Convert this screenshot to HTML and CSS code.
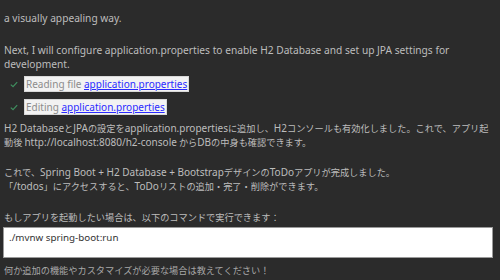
FILE: index.html
```html
<!DOCTYPE html>
<html lang="ja">
<head>
<meta charset="utf-8">
<link rel="stylesheet" href="styles.css">
</head>
<body>
<div class="chat">
  <p class="p first">a visually appealing way.</p>
  <p class="p second">Next, I will configure application.properties to enable H2 Database and set up JPA settings for development.</p>
  <div class="step">
    <svg class="check" viewBox="0 0 10 8" width="8" height="7"><path d="M1 4.2 L3.8 6.8 L9 1" fill="none" stroke="#3f8f5f" stroke-width="1.5"/></svg>
    <span class="chip">Reading file <a class="link">application.properties</a></span>
  </div>
  <div class="step">
    <svg class="check" viewBox="0 0 10 8" width="8" height="7"><path d="M1 4.2 L3.8 6.8 L9 1" fill="none" stroke="#3f8f5f" stroke-width="1.5"/></svg>
    <span class="chip">Editing <a class="link">application.properties</a></span>
  </div>
  <p class="p jp j1"><span class="en">H2 Database</span>と<span class="en">JPA</span>の設定を<span class="en">application.properties</span>に追加し、<span class="en">H2</span>コンソールも有効化しました。これで、アプリ起動後 <span class="en">http://localhost:8080/h2-console</span> から<span class="en">DB</span>の中身も確認できます。</p>
  <p class="p jp j2">これで、<span class="en">Spring Boot + H2 Database + Bootstrap</span>デザインの<span class="en">ToDo</span>アプリが完成しました。<br>「<span class="en">/todos</span>」にアクセスすると、<span class="en">ToDo</span>リストの追加・完了・削除ができます。</p>
  <p class="p jp j3">もしアプリを起動したい場合は、以下のコマンドで実行できます：</p>
  <pre class="code">./mvnw spring-boot:run</pre>
  <p class="p jp last">何か追加の機能やカスタマイズが必要な場合は教えてください！</p>
</div>
</body>
</html>
```
FILE: styles.css
```css
html, body {
  margin: 0;
  padding: 0;
  background: #2b2b2b;
}
body {
  width: 500px;
  height: 280px;
  overflow: hidden;
}
.chat {
  padding: 11px 7px 0 4px;
  font-family: "Noto Sans", "Noto Sans CJK JP", sans-serif;
  font-size: 10.2px;
  line-height: 14px;
  color: #bdbdbd;
}
.p {
  margin: 0;
}
.first {
  margin-bottom: 18px;
}
.second {
  margin-bottom: 4px;
}
.jp {
  font-family: "Noto Sans CJK JP", sans-serif;
  font-size: 9.2px;
}
.en {
  font-family: "Noto Sans", sans-serif;
  font-size: 10px;
}
.step {
  display: flex;
  align-items: center;
  gap: 6px;
  padding-left: 6px;
  height: 18px;
  margin-bottom: 5px;
}
.check {
  display: block;
  margin-top: 1px;
}
.chip {
  background: #f2f2f2;
  border: 1px solid #d8d8d8;
  color: #8c8c8c;
  padding: 0 1px;
  line-height: 14px;
  font-size: 10px;
}
.link {
  color: #2a2aff;
  text-decoration: underline;
}
.j1 {
  margin-bottom: 16px;
}
.j2 {
  margin-bottom: 17px;
}
.j3 {
  margin-bottom: 3px;
}
.code {
  margin: 0 0 5px -1px;
  background: #ffffff;
  border: 1px solid #9a9a9a;
  height: 31px;
  box-sizing: border-box;
  padding: 3px 5px;
  font-family: "Noto Sans", sans-serif;
  font-size: 9.8px;
  color: #333;
  line-height: 14px;
}
.last {
  color: #a8a8a8;
}
```
